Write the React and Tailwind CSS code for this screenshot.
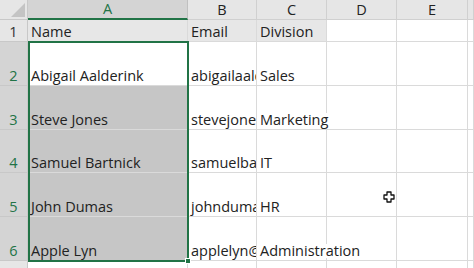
import React from 'react';

const cols = ['A', 'B', 'C', 'D', 'E', ''];
const rows = [
    ['Name', 'Email', 'Division'],
    ['Abigail Aalderink', 'abigailaalderink@example.com', 'Sales'],
    ['Steve Jones', 'stevejones@example.com', 'Marketing'],
    ['Samuel Bartnick', 'samuelbartnick@example.com', 'IT'],
    ['John Dumas', 'johndumas@example.com', 'HR'],
    ['Apple Lyn', 'applelyn@example.com', 'Administration'],
];
const rowHeights = ['h-[22px]', 'h-[44px]', 'h-[44px]', 'h-[43px]', 'h-[44px]', 'h-[44px]'];

const Cursor = () => (
    <svg width="12" height="12" viewBox="0 0 12 12" className="absolute left-[383px] top-[191px]">
        <path d="M4 1h4v3h3v4H8v3H4V8H1V4h3z" fill="#fff" stroke="#111" strokeWidth="1.3" strokeLinejoin="round" />
    </svg>
);

export default function App() {
    return (
        <div className="relative w-[474px] h-[268px] overflow-hidden bg-white text-[14.5px] text-[#222]" style={{ fontFamily: '"Open Sans", "Liberation Sans", sans-serif' }}>
            <div className="grid grid-cols-[28px_160px_69px_70px_70px_71px_1fr]">
                {/* column header row */}
                <div className="h-[20px] bg-[#e6e6e6] border-r border-b border-[#c8c8c8] relative">
                    <svg width="14" height="14" className="absolute right-[2px] bottom-[2px]" viewBox="0 0 14 14">
                        <path d="M14 0V14H0z" fill="#c4c4c4" />
                    </svg>
                </div>
                {cols.map((c, i) => (
                    <div
                        key={i}
                        className={
                            i === 0
                                ? 'h-[20px] bg-[#d4d4d4] border-r border-[#c0c0c0] border-b-2 border-b-[#217346] flex items-center justify-center text-[#217346]'
                                : 'h-[20px] bg-[#e6e6e6] border-r border-b border-[#d0d0d0] flex items-center justify-center'
                        }
                    >
                        {c}
                    </div>
                ))}
                {rows.map((r, ri) => (
                    <React.Fragment key={ri}>
                        <div
                            className={
                                (ri === 0 ? 'bg-[#e6e6e6] text-[#333] ' : 'bg-[#d4d4d4] text-[#217346] ') +
                                rowHeights[ri] +
                                ' border-r border-b border-[#c8c8c8] flex items-end justify-center pb-[2px] leading-[14px]'
                            }
                        >
                            {ri + 1}
                        </div>
                        {[0, 1, 2, 3, 4, 5].map((ci) => {
                            let bg = '';
                            if (ri === 0 && ci < 3) bg = 'bg-[#e7e7e7]';
                            if (ri > 1 && ci === 0) bg = 'bg-[#c6c6c6]';
                            const clip = ci === 2 ? 'overflow-visible relative z-10' : 'overflow-hidden';
                            return (
                                <div
                                    key={ci}
                                    className={bg + ' ' + clip + ' ' + rowHeights[ri] + ' border-r border-b border-[#dadada] whitespace-nowrap flex items-end pl-[3px] pb-[2px] leading-[14px]'}
                                >
                                    {r[ci] ? <span className={ci === 2 && ri > 0 ? 'bg-white' : ''}>{r[ci]}</span> : ''}
                                </div>
                            );
                        })}
                    </React.Fragment>
                ))}
                <div className="h-[10px] bg-[#e6e6e6] border-r border-[#c8c8c8]" />
                {[0, 1, 2, 3, 4, 5].map((ci) => (
                    <div key={ci} className="h-[10px] border-r border-[#dadada]" />
                ))}
            </div>
            {/* selection outline A2:A6 */}
            <div className="absolute left-[28px] top-[41px] w-[161px] h-[221px] border-2 border-[#217346] pointer-events-none" />
            <div className="absolute left-[185px] top-[258px] w-[6px] h-[6px] bg-[#217346] border border-white" />
            <Cursor />
        </div>
    );
}
